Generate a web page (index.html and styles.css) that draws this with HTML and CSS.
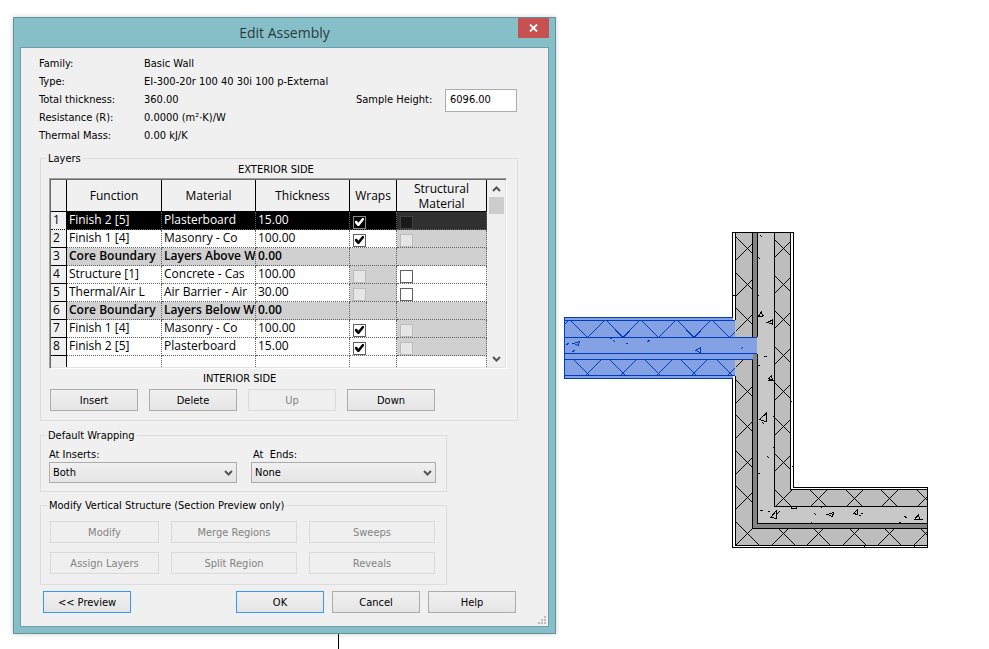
FILE: index.html
```
<!DOCTYPE html>
<html lang="en">
<head>
	<meta charset="utf-8">
	<title>Edit Assembly</title>
	<link rel="stylesheet" href="styles.css">
</head>
<body>
	<main class="workspace">
		<div class="left">
			<section class="dialog">
				<header class="titlebar">
					<h1>Edit Assembly</h1>
					<button type="button" class="close" aria-label="Close">
						<svg width="9" height="8" viewBox="0 0 9 8"><path d="M1 0.5L8 7.5M8 0.5L1 7.5" stroke="#fff" stroke-width="1.8"/></svg>
					</button>
				</header>

				<form class="client">
					<div class="info">
						<span>Family:</span><span class="value">Basic Wall</span>
						<span>Type:</span><span class="value">EI-300-20r 100 40 30i 100 p-External</span>
						<span>Total thickness:</span><span>360.00</span>
						<label for="height">Sample Height:</label>
						<input type="text" id="height" value="6096.00">
						<span>Resistance (R):</span><span>0.0000 (m²·K)/W</span>
						<span>Thermal Mass:</span><span>0.00 kJ/K</span>
					</div>

					<fieldset class="layers">
						<legend>Layers</legend>
						<div class="exterior">EXTERIOR SIDE</div>
						<div class="grid-frame">
							<table>
								<colgroup>
									<col class="c-num"><col class="c-func"><col class="c-mat"><col class="c-thick"><col class="c-wraps"><col class="c-struct">
								</colgroup>
								<thead>
									<tr><th></th><th>Function</th><th>Material</th><th>Thickness</th><th>Wraps</th><th>Structural<br>Material</th></tr>
								</thead>
								<tbody>
									<tr class="selected">
										<th>1</th><td>Finish 2 [5]</td><td>Plasterboard</td><td>15.00</td>
										<td><input type="checkbox" aria-label="Wraps 1" checked></td>
										<td class="off"><input type="checkbox" aria-label="Structural 1" disabled></td>
									</tr>
									<tr>
										<th>2</th><td>Finish 1 [4]</td><td>Masonry - Co</td><td>100.00</td>
										<td><input type="checkbox" aria-label="Wraps 2" checked></td>
										<td class="off"><input type="checkbox" aria-label="Structural 2" disabled></td>
									</tr>
									<tr class="core">
										<th>3</th><td>Core Boundary</td><td>Layers Above W</td><td>0.00</td><td></td><td></td>
									</tr>
									<tr>
										<th>4</th><td>Structure [1]</td><td>Concrete - Cas</td><td>100.00</td>
										<td class="off"><input type="checkbox" aria-label="Wraps 4" disabled></td>
										<td><input type="checkbox" aria-label="Structural 4"></td>
									</tr>
									<tr>
										<th>5</th><td>Thermal/Air L</td><td>Air Barrier - Air</td><td>30.00</td>
										<td class="off"><input type="checkbox" aria-label="Wraps 5" disabled></td>
										<td><input type="checkbox" aria-label="Structural 5"></td>
									</tr>
									<tr class="core">
										<th>6</th><td>Core Boundary</td><td>Layers Below W</td><td>0.00</td><td></td><td></td>
									</tr>
									<tr>
										<th>7</th><td>Finish 1 [4]</td><td>Masonry - Co</td><td>100.00</td>
										<td><input type="checkbox" aria-label="Wraps 7" checked></td>
										<td class="off"><input type="checkbox" aria-label="Structural 7" disabled></td>
									</tr>
									<tr>
										<th>8</th><td>Finish 2 [5]</td><td>Plasterboard</td><td>15.00</td>
										<td><input type="checkbox" aria-label="Wraps 8" checked></td>
										<td class="off"><input type="checkbox" aria-label="Structural 8" disabled></td>
									</tr>
									<tr class="blank"><th></th><td></td><td></td><td></td><td></td><td></td></tr>
								</tbody>
							</table>
							<div class="scrollbar">
								<svg width="9" height="6" viewBox="0 0 9 6"><path d="M1 5L4.5 1.5L8 5" fill="none" stroke="#555" stroke-width="2"/></svg>
								<div class="thumb"></div>
								<svg width="9" height="6" viewBox="0 0 9 6"><path d="M1 1L4.5 4.5L8 1" fill="none" stroke="#555" stroke-width="2"/></svg>
							</div>
						</div>
						<div class="interior">INTERIOR SIDE</div>
						<div class="row-buttons">
							<button type="button">Insert</button>
							<button type="button">Delete</button>
							<button type="button" disabled>Up</button>
							<button type="button">Down</button>
						</div>
					</fieldset>

					<fieldset class="wrapping">
						<legend>Default Wrapping</legend>
						<div class="wrap-fields">
							<label for="inserts">At Inserts:</label>
							<label for="ends" class="ends">At&nbsp; Ends:</label>
							<div class="select">
								<select id="inserts"><option>Both</option></select>
								<svg width="9" height="6" viewBox="0 0 9 6"><path d="M1 1L4.5 4.5L8 1" fill="none" stroke="#555" stroke-width="2"/></svg>
							</div>
							<div class="select">
								<select id="ends"><option>None</option></select>
								<svg width="9" height="6" viewBox="0 0 9 6"><path d="M1 1L4.5 4.5L8 1" fill="none" stroke="#555" stroke-width="2"/></svg>
							</div>
						</div>
					</fieldset>

					<fieldset class="vertical">
						<legend>Modify Vertical Structure (Section Preview only)</legend>
						<div class="vertical-buttons">
							<button type="button" disabled>Modify</button>
							<button type="button" disabled>Merge Regions</button>
							<button type="button" disabled>Sweeps</button>
							<button type="button" disabled>Assign Layers</button>
							<button type="button" disabled>Split Region</button>
							<button type="button" disabled>Reveals</button>
						</div>
					</fieldset>

					<div class="footer">
						<button type="button" class="primary preview-btn">&lt;&lt; Preview</button>
						<button type="button" class="primary">OK</button>
						<button type="button">Cancel</button>
						<button type="button">Help</button>
					</div>

					<svg class="grip" width="8" height="8" viewBox="0 0 8 8" fill="#bcbcbc">
						<path d="M6 0h2v2h-2zM3 3h2v2h-2zM6 3h2v2h-2zM0 6h2v2h-2zM3 6h2v2h-2zM6 6h2v2h-2z"/>
					</svg>
				</form>
			</section>
			<div class="model-line"></div>
		</div>

		<!-- wall junction in plan -->
		<svg class="plan" width="372" height="324" viewBox="560 228 372 324" fill="none" shape-rendering="crispEdges">
			<defs>
				<clipPath id="outer"><path d="M736 233H752V529H927V545H736Z"/></clipPath>
				<clipPath id="inner"><path d="M775 233H790V490H927V506H775Z"/></clipPath>
				<clipPath id="top"><path d="M565 321H735V337H565Z"/></clipPath>
				<clipPath id="bottom"><path d="M565 360H735V375H565Z"/></clipPath>
				<path id="x" d="M-12.5 -12.5L12.5 12.5M-12.5 12.5L12.5 -12.5"/>
			</defs>

			<path fill="#bdbdbd" d="M735 233H752V529H927V545H735ZM775 233H790V490H927V506H775Z"/>
			<path fill="#c8c8c8" d="M757 233H774V507H927V523H757Z"/>
			<path fill="#848484" d="M753 233H757V524H927V528H753Z"/>

			<g stroke="#000" clip-path="url(#outer)">
				<use href="#x" x="747.5" y="248.5"/><use href="#x" x="747.5" y="284.5"/><use href="#x" x="747.5" y="319.5"/>
				<use href="#x" x="747.5" y="355.5"/><use href="#x" x="747.5" y="391.5"/><use href="#x" x="747.5" y="426.5"/>
				<use href="#x" x="747.5" y="462.5"/><use href="#x" x="747.5" y="497.5"/><use href="#x" x="747.5" y="533.5"/>
				<use href="#x" x="783.5" y="533.5"/><use href="#x" x="818.5" y="533.5"/><use href="#x" x="854.5" y="533.5"/>
				<use href="#x" x="889.5" y="533.5"/><use href="#x" x="925.5" y="533.5"/>
			</g>
			<g stroke="#000" clip-path="url(#inner)">
				<use href="#x" x="783.5" y="248.5"/><use href="#x" x="783.5" y="284.5"/><use href="#x" x="783.5" y="319.5"/>
				<use href="#x" x="783.5" y="355.5"/><use href="#x" x="783.5" y="391.5"/><use href="#x" x="783.5" y="426.5"/>
				<use href="#x" x="783.5" y="462.5"/><use href="#x" x="783.5" y="498.5"/><use href="#x" x="818.5" y="498.5"/>
				<use href="#x" x="854.5" y="498.5"/><use href="#x" x="889.5" y="498.5"/><use href="#x" x="925.5" y="498.5"/>
			</g>

			<g stroke="#000">
				<path d="M732.5 318V232.5H793.5V487.5H927.5V547.5H732.5V379"/>
				<path d="M735.5 320V233M735.5 376V545.5H927M752.5 337V233M752.5 360V528.5H927M757.5 337V233M757.5 354V523.5H927"/>
				<path d="M774.5 233V506.5H927M790.5 233V489.5H927"/>
				<path d="M760 235l2 2M758 257l2 2M758 295.500h1M733 295.500h2M758.500 316.500l3-5l1 5zM762 315.500h2M767.500 322.500l5-2.500v4zM764 356.500h3M758 365l2 1M768.500 378.500l3-3l1 5z"/>
				<path d="M768 380.500h6M759.500 419.500l6.500-6v8zM762 422l2 2M767 456l2 2M758 473l2 1M760 510.500h3M768 511.500h2M770.500 517.500l6-7v8zM777 514l3-3M791.500 507v1.500h5v-1.500M773 416.500h1M773 447.500h1M791 401.500h1M792 466.500h1"/>
				<path d="M827.500 514.500l6-2l-1 4zM814 513l2 2M821 507.500h1M811 522.500h1M853.500 513.500l4-4v5zM859 515.500h2M861 513l2 1M904 516.500l3 1M899 522.500h2M914.500 519.500l4-5l1 5zM918 519.500h5M864.500 546v1M914.500 546v1"/>
			</g>

			<!-- selected wall -->
			<path fill="#84a1e3" d="M564 317H733V320H735V337H757V354H753V360H735V376H733V379H564Z"/>
			<g stroke="#003cbe">
				<path d="M733 317.500H564.500V378.500H733M564 320.500H735M564 337.500H757M564 353.500H757M564 359.500H753M564 375.500H735"/>
				<path clip-path="url(#top)" d="M561 328L569.500 319.500L587.500 337.500L605.500 319.500L623 337.500L640.500 319.500L658.500 337.500L676.500 319.500L694 337.500L711.500 319.500L729.500 337.500L747 319.500"/>
				<path clip-path="url(#bottom)" d="M573 359L590 376M602 359L585 376M609 359L626 376M637 359L620 376M644 359L661 376M673 359L656 376M680 359L697 376M708 359L691 376M716 359L733 376M744 359L727 376"/>
				<path d="M573.500 343.500l6-2l-1.500 4zM566 344.500l3-1M572 351.500l3-1M610 338.500h2M613 340.500l2 1M626 343.500h2M647 342l3-2M695.500 350.500l5-3v5zM741 349l2-2"/>
			</g>
		</svg>
	</main>
</body>
</html>
```
FILE: styles.css
```
* {
	box-sizing: border-box;
}

body {
	margin: 0;
	background-color: #fff;
	color: #000;
	font-family: "DejaVu Sans Condensed", "Noto Sans", sans-serif;
	font-size: 11px;
}

.workspace {
	display: flex;
	align-items: flex-start;
	min-height: 100vh;
}

.left {
	display: flex;
	flex-direction: column;
	width: 543px;
	height: 100vh;
	margin-left: 13px;
	padding-top: 17px;
	flex-shrink: 0;
}

.dialog {
	padding: 0 6px 6px;
	background-color: #87bfc8;
	border: 1px solid #5f949c;
	box-shadow: 0 0 5px rgba(0, 0, 0, 0.2);
}

.titlebar {
	display: grid;
	grid-template-columns: 1fr;
	height: 29px;
}

.titlebar h1 {
	grid-area: 1 / 1;
	margin: 0;
	text-align: center;
	font-family: "Open Sans", "Noto Sans", sans-serif;
	font-size: 14px;
	font-weight: normal;
	line-height: 30px;
	color: #2b3b3e;
}

.close {
	grid-area: 1 / 1;
	justify-self: end;
	display: flex;
	align-items: center;
	justify-content: center;
	width: 31px;
	height: 20px;
	padding: 0;
	background: #c75050;
	border: none;
}

.client {
	position: relative;
	padding: 7px 30px 13px 18px;
	background-color: #f0f0f0;
	border: 1px solid #6c9fa7;
}

.info {
	display: grid;
	grid-template-columns: 105px 212px 89px 72px;
	grid-auto-rows: 18px;
	line-height: 18px;
	white-space: nowrap;
}

.info span:nth-of-type(odd) {
	grid-column: 1;
}

.info .value {
	grid-column: 2 / span 3;
}

.info input {
	height: 23px;
	margin-top: -2px;
	padding: 0 4px 3px;
	border: 1px solid #abadb3;
	background-color: #fff;
	font: inherit;
}

fieldset {
	margin: 6px 0 0 1px;
	padding: 0 8px;
	border: 1px solid #dcdcdc;
	min-width: 0;
}

legend {
	margin-left: -3px;
	padding: 0 2px;
	line-height: 15px;
}

button {
	height: 22px;
	padding: 0;
	background: linear-gradient(#f0f0f0, #e5e5e5);
	border: 1px solid #acacac;
	font: inherit;
	color: #000;
}

button:disabled {
	background: #efefef;
	border-color: #d9d9d9;
	color: #838383;
}

button.primary {
	border-color: #3399ff;
}

.layers {
	padding: 0 10px 9px 8px;
}

.exterior {
	margin-top: -4px;
	padding-left: 189px;
	line-height: 16px;
}

.interior {
	padding-left: 154px;
	line-height: 20px;
}

.grid-frame {
	display: flex;
	height: 191px;
	overflow: hidden;
	background-color: #f0f0f0;
	border: 1px solid;
	border-color: #a0a0a0 #fff #fff #a0a0a0;
	box-shadow: inset 1px 1px #696969, inset -1px -1px #e3e3e3;
	padding: 1px;
}

table {
	flex: 1;
	width: 100%;
	min-width: 0;
	table-layout: fixed;
	border-collapse: separate;
	border-spacing: 0;
	font-family: "Open Sans", "Noto Sans", sans-serif;
	font-size: 12px;
	line-height: 15px;
}

.c-num { width: 16px; }
.c-func { width: 95px; }
.c-mat { width: 94px; }
.c-thick { width: 94px; }
.c-wraps { width: 47px; }
.c-struct { width: 90px; }

th {
	padding: 0;
	font-weight: normal;
	border-right: 1px solid #000;
	border-bottom: 1px solid #000;
}

thead th {
	height: 32px;
}

tbody th {
	text-align: left;
	padding: 0 0 2px 2px;
}

td {
	height: 18px;
	padding: 0 0 2px 2px;
	background-color: #fff;
	border-right: 1px dotted #606060;
	border-bottom: 1px dotted #606060;
	overflow: hidden;
	white-space: nowrap;
}

td.off,
.core td {
	background-color: #d0d0d0;
}

.core td {
	font-weight: 600;
}

.selected td {
	background-color: #000;
	color: #fff;
}

.selected td.off {
	background-color: #303030;
}

.selected th {
	border-bottom-style: dotted;
}

.blank th,
.blank td {
	height: 11px;
	padding: 0;
	border-bottom: none;
}

input[type="checkbox"] {
	appearance: none;
	display: block;
	width: 13px;
	height: 13px;
	margin: 3px 0 0 1px;
	background-color: #fff;
	border: 1px solid #606060;
}

td:has(input) {
	padding-bottom: 0;
}

input[type="checkbox"]:checked::after {
	content: "";
	display: block;
	width: 9px;
	height: 9px;
	margin: 1px;
	background-color: #000;
	clip-path: polygon(0 40%, 20% 35%, 38% 58%, 85% 0, 100% 12%, 100% 25%, 45% 95%, 30% 95%, 0 60%);
}

input[type="checkbox"]:disabled {
	background-color: #e6e6e6;
	border-color: #bcbcbc;
}

.selected input[type="checkbox"] {
	background-color: #000;
	border-color: #8c8c8c;
}

.selected input[type="checkbox"]:checked::after {
	background-color: #fff;
}

.selected input[type="checkbox"]:disabled {
	background-color: #1a1a1a;
	border-color: #404040;
}

.scrollbar {
	display: flex;
	flex-direction: column;
	align-items: center;
	width: 18px;
	flex-shrink: 0;
	padding: 6px 0 5px;
}

.thumb {
	width: 15px;
	height: 17px;
	margin: 5px 0 auto 1px;
	background-color: #cdcdcd;
}

.row-buttons {
	display: flex;
	gap: 11px;
	margin-left: 1px;
}

.row-buttons button {
	width: 88px;
}

.wrapping,
.vertical {
	width: 407px;
}

.wrapping {
	margin-top: 7px;
	padding: 4px 10px 8px 8px;
}

.wrap-fields {
	display: grid;
	grid-template-columns: 188px 185px;
	column-gap: 14px;
	line-height: 15px;
}

.ends {
	padding-left: 2px;
}

.select {
	position: relative;
}

.select svg {
	position: absolute;
	right: 4px;
	top: 8px;
	pointer-events: none;
}

select {
	appearance: none;
	display: block;
	width: 100%;
	height: 21px;
	padding: 0 3px;
	background: linear-gradient(#f0f0f0, #e5e5e5);
	border: 1px solid #acacac;
	border-radius: 0;
	font: inherit;
	color: #000;
}

.vertical {
	padding: 8px 11px 10px 9px;
}

.vertical-buttons {
	display: grid;
	grid-template-columns: 109px 126px 126px;
	gap: 9px 12px;
}

.footer {
	display: flex;
	gap: 8px;
	margin: 6px 2px 0 4px;
}

.footer button {
	width: 88px;
}

.footer .preview-btn {
	margin-right: auto;
}

.grip {
	position: absolute;
	right: 2px;
	bottom: 2px;
}

.model-line {
	flex: 1;
	margin-left: 325px;
	border-left: 1px solid #000;
}

.plan {
	margin: 228px 0 0 4px;
	flex-shrink: 0;
}
```
